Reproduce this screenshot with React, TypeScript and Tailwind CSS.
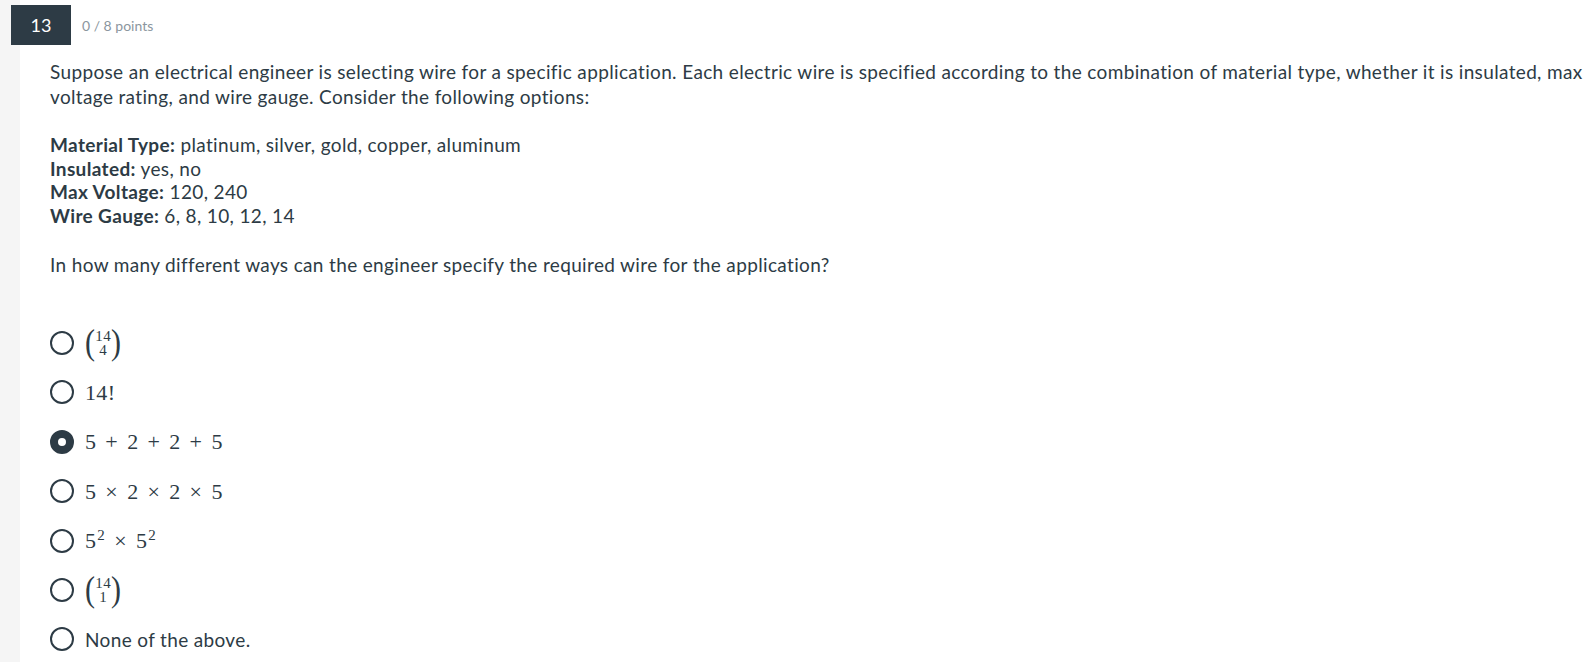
import React from 'react';

const ink = 'text-[#2d3b45]';

const Binom: React.FC<{ top: string; bottom: string }> = ({ top, bottom }) => (
  <span className="inline-flex items-center font-['Liberation_Serif',serif] text-[#2d3b45]">
    <span className="text-[30px] leading-none -mt-[3px] scale-y-[1.2] font-light">(</span>
    <span className="flex flex-col items-center text-[15px] leading-[14px]">
      <span>{top}</span>
      <span>{bottom}</span>
    </span>
    <span className="text-[30px] leading-none -mt-[3px] scale-y-[1.2] font-light">)</span>
  </span>
);

const MathText: React.FC<{ children: React.ReactNode }> = ({ children }) => (
  <span className="font-['Liberation_Serif',serif] text-[22px] text-[#2d3b45]">{children}</span>
);

const Op: React.FC<{ c: string }> = ({ c }) => <span className="mx-[9px]">{c}</span>;

const Sq: React.FC = () => <sup className="text-[15px] top-[-0.55em] ml-[1px]">2</sup>;

const options: { content: React.ReactNode; selected?: boolean }[] = [
  { content: <Binom top="14" bottom="4" /> },
  { content: <MathText>14!</MathText> },
  {
    content: (
      <MathText>
        5<Op c="+" />2<Op c="+" />2<Op c="+" />5
      </MathText>
    ),
    selected: true,
  },
  {
    content: (
      <MathText>
        5<Op c="×" />2<Op c="×" />2<Op c="×" />5
      </MathText>
    ),
  },
  {
    content: (
      <MathText>
        5<Sq />
        <Op c="×" />5<Sq />
      </MathText>
    ),
  },
  { content: <Binom top="14" bottom="1" /> },
  {
    content: <span className="text-[19px] tracking-[0.35px] text-[#2d3b45]">None of the above.</span>,
  },
];

export default function App() {
  return (
    <div className="flex min-h-[662px] bg-white font-['Lato','Noto_Sans',sans-serif]">
      {/* side gutter */}
      <div className="w-[20px] shrink-0 bg-[#f5f5f5]" />

      <div className="flex-1 pt-[5px]">
        <div className="flex items-center -ml-[9px]">
          <div className="w-[60px] h-[40px] bg-[#2d3b45] text-white text-[18px] flex items-center justify-center">
            13
          </div>
          <span className="ml-[11px] text-[14px] text-[#8b969e]">0 / 8 points</span>
        </div>

        <div className={`pl-[30px] pt-[14px] text-[19px] tracking-[0.35px] leading-[25px] ${ink}`}>
          <p>
            Suppose an electrical engineer is selecting wire for a specific application. Each electric wire is
            specified according to the combination of material type, whether it is insulated, max voltage rating,
            and wire gauge. Consider the following options:
          </p>
          <p className="mt-[24px] leading-[23.6px]">
            <strong className="font-bold">Material Type:</strong> platinum, silver, gold, copper, aluminum
            <br />
            <strong className="font-bold">Insulated:</strong> yes, no
            <br />
            <strong className="font-bold">Max Voltage:</strong> 120, 240
            <br />
            <strong className="font-bold">Wire Gauge:</strong> 6, 8, 10, 12, 14
          </p>
          <p className="mt-[25px]">
            In how many different ways can the engineer specify the required wire for the application?
          </p>

          <div className="mt-[41px] flex flex-col">
            {options.map((o, i) => (
              <label key={i} className="h-[49.4px] flex items-center gap-[11px]">
                <span
                  className={`w-[24px] h-[24px] rounded-full border-[#2d3b45] shrink-0 ${
                    o.selected ? 'border-[8px]' : 'border-[2.5px]'
                  }`}
                />
                {o.content}
              </label>
            ))}
          </div>
        </div>
      </div>
    </div>
  );
}
